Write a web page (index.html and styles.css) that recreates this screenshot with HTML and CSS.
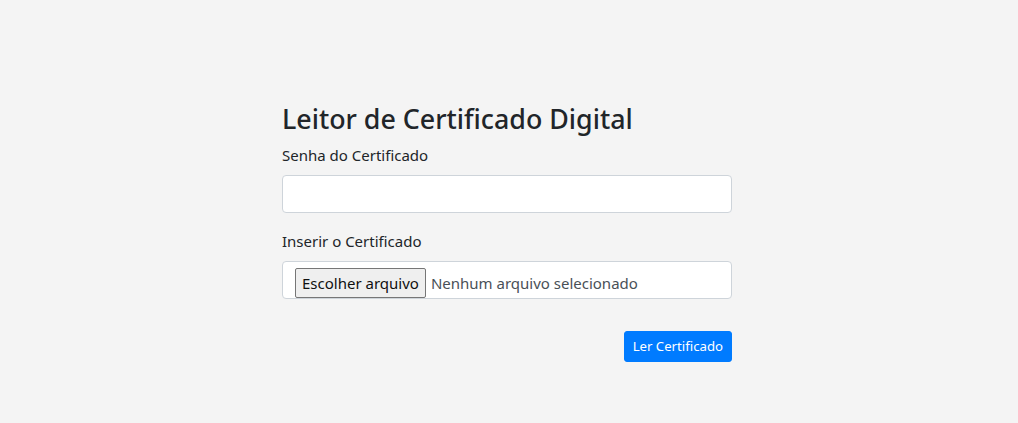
FILE: index.html
```html
<!DOCTYPE html>
<html lang="pt-BR">
<head>
<meta charset="utf-8">
<title>Leitor de Certificado Digital</title>
<link rel="stylesheet" href="styles.css">
</head>
<body>
<main class="page">
  <form class="card">
    <h3 class="title">Leitor de Certificado Digital</h3>
    <div class="group">
      <label class="label" for="senha">Senha do Certificado</label>
      <input class="control" id="senha" type="password">
    </div>
    <div class="group">
      <label class="label">Inserir o Certificado</label>
      <div class="control file">
        <span class="file-btn">Escolher arquivo</span>
        <span class="file-name">Nenhum arquivo selecionado</span>
      </div>
    </div>
    <div class="actions">
      <button type="button" class="btn-primary">Ler Certificado</button>
    </div>
  </form>
</main>
</body>
</html>
```
FILE: styles.css
```css
* { box-sizing: border-box; }
html, body { margin: 0; background: #f4f4f4; }
body {
  font-family: "Noto Sans", "DejaVu Sans", sans-serif;
  font-size: 15px;
  line-height: 24px;
  color: #212529;
}
.page {
  display: flex;
  justify-content: center;
  padding: 103px 4px 0 0;
}
.card {
  width: 450px;
  margin: 0;
}
.title {
  margin: 0 0 8px;
  font-size: 26.8px;
  line-height: 1.2;
  font-weight: 500;
}
.group { margin-bottom: 16px; display: flex; flex-direction: column; }
.label { display: block; margin-bottom: 8px; }
.control {
  display: block;
  width: 100%;
  height: 38px;
  padding: 6px 12px;
  font: inherit;
  color: #495057;
  background: #fff;
  border: 1px solid #ced4da;
  border-radius: 4px;
  outline: none;
}
.file {
  display: flex;
  align-items: flex-start;
  padding: 6px 12px 0;
  overflow: hidden;
}
.file-btn {
  height: 30px;
  padding: 0 6px 1px;
  display: flex;
  align-items: center;
  background: #efefef;
  border: 1px solid #767676;
  border-radius: 2px;
  color: #101010;
  font-size: 15px;
  white-space: nowrap;
}
.file-name {
  margin-left: 5px;
  height: 30px;
  padding-bottom: 1px;
  display: flex;
  align-items: center;
  color: #495057;
  font-size: 15px;
  white-space: nowrap;
}
.actions {
  display: flex;
  justify-content: flex-end;
  padding-top: 16px;
}
.btn-primary {
  height: 31px;
  padding: 0 8px;
  font-family: inherit;
  font-size: 13.2px;
  line-height: 1.5;
  color: #fff;
  background: #007bff;
  border: 1px solid #007bff;
  border-radius: 3px;
}
```
